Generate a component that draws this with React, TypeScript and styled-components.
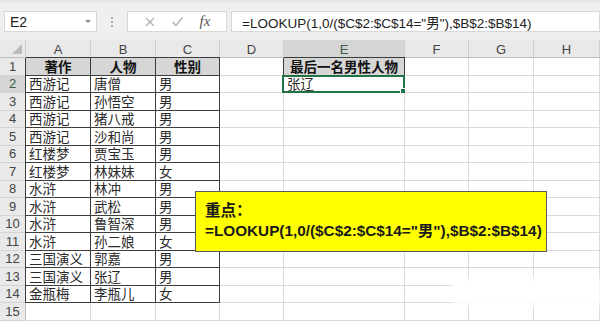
import React from "react";
import styled, { createGlobalStyle } from "styled-components";

const GlobalStyle = createGlobalStyle`
  html, body {
    margin: 0;
    padding: 0;
    background: #ffffff;
    overflow: hidden;
  }
  body {
    font-family: "Liberation Sans", "Noto Sans CJK SC", sans-serif;
  }
`;

const COLS = [
  { key: "A", width: 65 },
  { key: "B", width: 65 },
  { key: "C", width: 64 },
  { key: "D", width: 64 },
  { key: "E", width: 121 },
  { key: "F", width: 64 },
  { key: "G", width: 65 },
  { key: "H", width: 66 },
];

const TABLE: [string, string, string][] = [
  ["著作", "人物", "性别"],
  ["西游记", "唐僧", "男"],
  ["西游记", "孙悟空", "男"],
  ["西游记", "猪八戒", "男"],
  ["西游记", "沙和尚", "男"],
  ["红楼梦", "贾宝玉", "男"],
  ["红楼梦", "林妹妹", "女"],
  ["水浒", "林冲", "男"],
  ["水浒", "武松", "男"],
  ["水浒", "鲁智深", "男"],
  ["水浒", "孙二娘", "女"],
  ["三国演义", "郭嘉", "男"],
  ["三国演义", "张辽", "男"],
  ["金瓶梅", "李瓶儿", "女"],
];

const FORMULA = '=LOOKUP(1,0/($C$2:$C$14="男"),$B$2:$B$14)';

const Page = styled.div`
  width: 600px;
  height: 321px;
  position: relative;
  overflow: hidden;
  background: #fff;
`;

const FormulaBar = styled.div`
  height: 40px;
  box-sizing: border-box;
  background: #efefef;
  border-top: 3px solid #e6e6e6;
  display: flex;
  align-items: flex-start;
  padding: 8px 0 0 4px;
`;

const Field = styled.div<{ $w?: number }>`
  height: 21px;
  box-sizing: border-box;
  background: #fff;
  border: 1px solid #d8d8d8;
  display: flex;
  align-items: center;
  width: ${(p) => (p.$w ? `${p.$w}px` : "auto")};
  flex: ${(p) => (p.$w ? "none" : "1")};
`;

const NameBox = styled(Field)`
  justify-content: space-between;
  padding: 0 5px;
  font-size: 14px;
  color: #222;
`;

const Caret = styled.span`
  width: 0;
  height: 0;
  border-left: 3px solid transparent;
  border-right: 3px solid transparent;
  border-top: 3px solid #888;
`;

const Grip = styled.div`
  width: 30px;
  height: 21px;
  display: flex;
  flex-direction: column;
  align-items: center;
  justify-content: center;
  gap: 2px;
  span {
    width: 2px;
    height: 2px;
    background: #b0b0b0;
  }
`;

const Buttons = styled(Field)`
  justify-content: space-around;
  padding: 0 8px;
  margin-right: 4px;
`;

const FxText = styled.span`
  font-family: "Liberation Serif", serif;
  font-style: italic;
  font-size: 15px;
  color: #555;
`;

const FormulaText = styled(Field)`
  padding-left: 10px;
  font-size: 13.5px;
  color: #222;
  white-space: nowrap;
`;

const Sheet = styled.div`
  display: grid;
  grid-template-columns: 26px ${COLS.map((c) => `${c.width}px`).join(" ")};
  grid-template-rows: 18px repeat(15, 17.5px);
`;

const Corner = styled.div`
  background: #e9e9e9;
  border-right: 1px solid #cfcfcf;
  border-bottom: 1px solid #bdbdbd;
  position: relative;
  &::after {
    content: "";
    position: absolute;
    right: 3px;
    bottom: 3px;
    border-left: 10px solid transparent;
    border-bottom: 10px solid #bcbcbc;
  }
`;

const ColHead = styled.div<{ $active?: boolean }>`
  background: ${(p) => (p.$active ? "#d5d5d5" : "#e9e9e9")};
  border-right: 1px solid #cfcfcf;
  border-bottom: 1px solid #bdbdbd;
  color: ${(p) => (p.$active ? "#3a5a46" : "#444")};
  font-size: 13px;
  display: flex;
  align-items: center;
  justify-content: center;
  padding-top: 1px;
`;

const RowHead = styled.div<{ $active?: boolean }>`
  background: ${(p) => (p.$active ? "#d5d5d5" : "#e9e9e9")};
  border-right: 1px solid #bdbdbd;
  border-bottom: 1px solid #d4d4d4;
  color: ${(p) => (p.$active ? "#3a5a46" : "#444")};
  font-size: 13px;
  display: flex;
  align-items: center;
  justify-content: center;
`;

const Cell = styled.div<{
  $boxed?: boolean;
  $head?: boolean;
  $top?: boolean;
  $left?: boolean;
}>`
  position: relative;
  box-sizing: border-box;
  border-right: 1px solid ${(p) => (p.$boxed ? "#3c3c3c" : "#dadada")};
  border-bottom: 1px solid ${(p) => (p.$boxed ? "#3c3c3c" : "#dadada")};
  box-shadow: ${(p) =>
    [p.$top ? "0 -1px 0 #3c3c3c" : "", p.$left ? "-1px 0 0 #3c3c3c" : ""]
      .filter(Boolean)
      .join(", ") || "none"};
  background: ${(p) => (p.$head ? "#d6d6d6" : "#fff")};
  font-family: "Noto Sans CJK SC", sans-serif;
  font-size: 13.5px;
  font-weight: ${(p) => (p.$head ? 700 : 400)};
  color: ${(p) => (p.$head ? "#111" : "#2a2a2a")};
  display: flex;
  align-items: center;
  justify-content: ${(p) => (p.$head ? "center" : "flex-start")};
  padding-left: ${(p) => (p.$head ? 0 : 3)}px;
  white-space: nowrap;
  line-height: 1;
`;

const Selection = styled.div`
  position: absolute;
  inset: -1px -1px -1px -2px;
  border: 2px solid #217346;
  pointer-events: none;
  &::after {
    content: "";
    position: absolute;
    right: -4px;
    bottom: -4px;
    width: 5px;
    height: 5px;
    background: #217346;
    border: 1px solid #fff;
  }
`;

const Callout = styled.div`
  position: absolute;
  left: 195px;
  top: 191px;
  width: 352px;
  height: 61px;
  box-sizing: border-box;
  background: #ffff00;
  border: 1px solid #5a5a5a;
  padding: 6px 0 0 9px;
  font-family: "Liberation Sans", "Noto Sans CJK SC", sans-serif;
  font-weight: 700;
  font-size: 15.3px;
  line-height: 22px;
  color: #1a1a1a;
  white-space: nowrap;
`;

const CalloutTitle = styled.div`
  font-family: "Noto Sans CJK SC", sans-serif;
  font-size: 15.5px;
`;

const Smudge = styled.div`
  position: absolute;
  left: 452px;
  top: 278px;
  width: 150px;
  height: 28px;
  background: #fff;
  filter: blur(3px);
`;

const XIcon = () => (
  <svg width="12" height="12" viewBox="0 0 12 12">
    <path d="M2 2 L10 10 M10 2 L2 10" stroke="#b0b0b0" strokeWidth="1.3" />
  </svg>
);

const CheckIcon = () => (
  <svg width="13" height="11" viewBox="0 0 13 11">
    <path d="M1.5 6 L5 9.5 L11.5 1.5" stroke="#b0b0b0" strokeWidth="1.4" fill="none" />
  </svg>
);

function cellValue(row: number, col: string): string {
  const idx = "ABC".indexOf(col);
  if (idx >= 0 && row <= 14) return TABLE[row - 1][idx];
  if (col === "E" && row === 1) return "最后一名男性人物";
  if (col === "E" && row === 2) return "张辽";
  return "";
}

export default function App() {
  const rows = Array.from({ length: 15 }, (_, i) => i + 1);
  return (
    <Page>
      <GlobalStyle />
      <FormulaBar>
        <NameBox $w={93}>
          <span>E2</span>
          <Caret />
        </NameBox>
        <Grip>
          <span />
          <span />
          <span />
        </Grip>
        <Buttons $w={100}>
          <XIcon />
          <CheckIcon />
          <FxText>fx</FxText>
        </Buttons>
        <FormulaText>{FORMULA}</FormulaText>
      </FormulaBar>

      <Sheet>
        <Corner />
        {COLS.map((c) => (
          <ColHead key={c.key} $active={c.key === "E"}>
            {c.key}
          </ColHead>
        ))}
        {rows.map((r) => (
          <React.Fragment key={r}>
            <RowHead $active={r === 2}>{r}</RowHead>
            {COLS.map((c) => {
              const inTable = "ABC".includes(c.key) && r <= 14;
              const isE1 = c.key === "E" && r === 1;
              return (
                <Cell
                  key={c.key}
                  $boxed={inTable || isE1}
                  $head={(inTable && r === 1) || isE1}
                  $top={(inTable && r === 1) || isE1}
                  $left={(inTable && c.key === "A") || isE1}
                >
                  {cellValue(r, c.key)}
                  {c.key === "E" && r === 2 && <Selection />}
                </Cell>
              );
            })}
          </React.Fragment>
        ))}
      </Sheet>

      <Smudge />

      <Callout>
        <CalloutTitle>重点：</CalloutTitle>
        <div>{FORMULA}</div>
      </Callout>
    </Page>
  );
}
